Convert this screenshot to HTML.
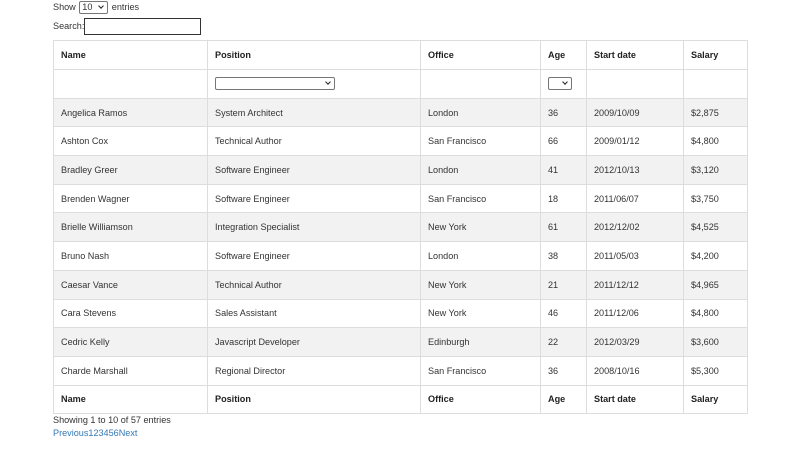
<!DOCTYPE html>
<html><head><style>
body{margin:0;background:#fff;font-family:"Liberation Sans",sans-serif;font-size:9.1px;color:#333;width:800px;height:450px;overflow:hidden;position:relative}
.top1{position:absolute;left:53px;top:1px;height:12px;line-height:12px}
.top1 .s10{display:inline-block;position:relative;width:25px;height:11px;border:1px solid #767676;border-radius:2px;vertical-align:top;line-height:11px;padding-left:2px;box-sizing:content-box;margin:0 1px}
.top1 .s10:after{content:"";position:absolute;right:4px;top:2px;width:3px;height:3px;border-right:1.5px solid #222;border-bottom:1.5px solid #222;transform:rotate(45deg)}
.top2{position:absolute;left:53px;top:18px;line-height:17px}
.top2 .in{position:absolute;left:31px;top:0;width:117px;height:17px;border:1px solid #333;box-sizing:border-box}
table{position:absolute;left:53px;top:40px;border-collapse:collapse;width:694px;table-layout:fixed}
td,th{border:1px solid #ddd;padding:0 7px;text-align:left;height:28.7px;box-sizing:border-box;white-space:nowrap}
th{font-weight:bold;color:#222}
thead tr:first-child th{height:29px}
tr.s td{background:#f2f2f2}
.sel{display:inline-block;border:1px solid #767676;border-radius:2px;height:11px;background:#fff;position:relative;vertical-align:middle}
.sel:after{content:"";position:absolute;right:4px;top:2px;width:3px;height:3px;border-right:1.5px solid #222;border-bottom:1.5px solid #222;transform:rotate(45deg)}
.bot1{position:absolute;left:53px;top:415px}
.bot2{position:absolute;left:53px;top:428px;color:#337ab7}
</style></head><body>
<div class="top1">Show <span class="s10">10</span> entries</div>
<div class="top2">Search:<span class="in"></span></div>
<table>
<colgroup><col style="width:154px"><col style="width:213px"><col style="width:120px"><col style="width:46px"><col style="width:97px"><col style="width:64px"></colgroup>
<thead>
<tr><th>Name</th><th>Position</th><th>Office</th><th>Age</th><th>Start date</th><th>Salary</th></tr>
<tr><td></td><td><span class="sel" style="width:118px"></span></td><td></td><td><span class="sel" style="width:22px"></span></td><td></td><td></td></tr>
</thead>
<tbody>
<tr class="s"><td>Angelica Ramos</td><td>System Architect</td><td>London</td><td>36</td><td>2009/10/09</td><td>$2,875</td></tr>
<tr><td>Ashton Cox</td><td>Technical Author</td><td>San Francisco</td><td>66</td><td>2009/01/12</td><td>$4,800</td></tr>
<tr class="s"><td>Bradley Greer</td><td>Software Engineer</td><td>London</td><td>41</td><td>2012/10/13</td><td>$3,120</td></tr>
<tr><td>Brenden Wagner</td><td>Software Engineer</td><td>San Francisco</td><td>18</td><td>2011/06/07</td><td>$3,750</td></tr>
<tr class="s"><td>Brielle Williamson</td><td>Integration Specialist</td><td>New York</td><td>61</td><td>2012/12/02</td><td>$4,525</td></tr>
<tr><td>Bruno Nash</td><td>Software Engineer</td><td>London</td><td>38</td><td>2011/05/03</td><td>$4,200</td></tr>
<tr class="s"><td>Caesar Vance</td><td>Technical Author</td><td>New York</td><td>21</td><td>2011/12/12</td><td>$4,965</td></tr>
<tr><td>Cara Stevens</td><td>Sales Assistant</td><td>New York</td><td>46</td><td>2011/12/06</td><td>$4,800</td></tr>
<tr class="s"><td>Cedric Kelly</td><td>Javascript Developer</td><td>Edinburgh</td><td>22</td><td>2012/03/29</td><td>$3,600</td></tr>
<tr><td>Charde Marshall</td><td>Regional Director</td><td>San Francisco</td><td>36</td><td>2008/10/16</td><td>$5,300</td></tr>
</tbody>
<tfoot><tr><th>Name</th><th>Position</th><th>Office</th><th>Age</th><th>Start date</th><th>Salary</th></tr></tfoot>
</table>
<div class="bot1">Showing 1 to 10 of 57 entries</div>
<div class="bot2">Previous123456Next</div>
</body></html>
